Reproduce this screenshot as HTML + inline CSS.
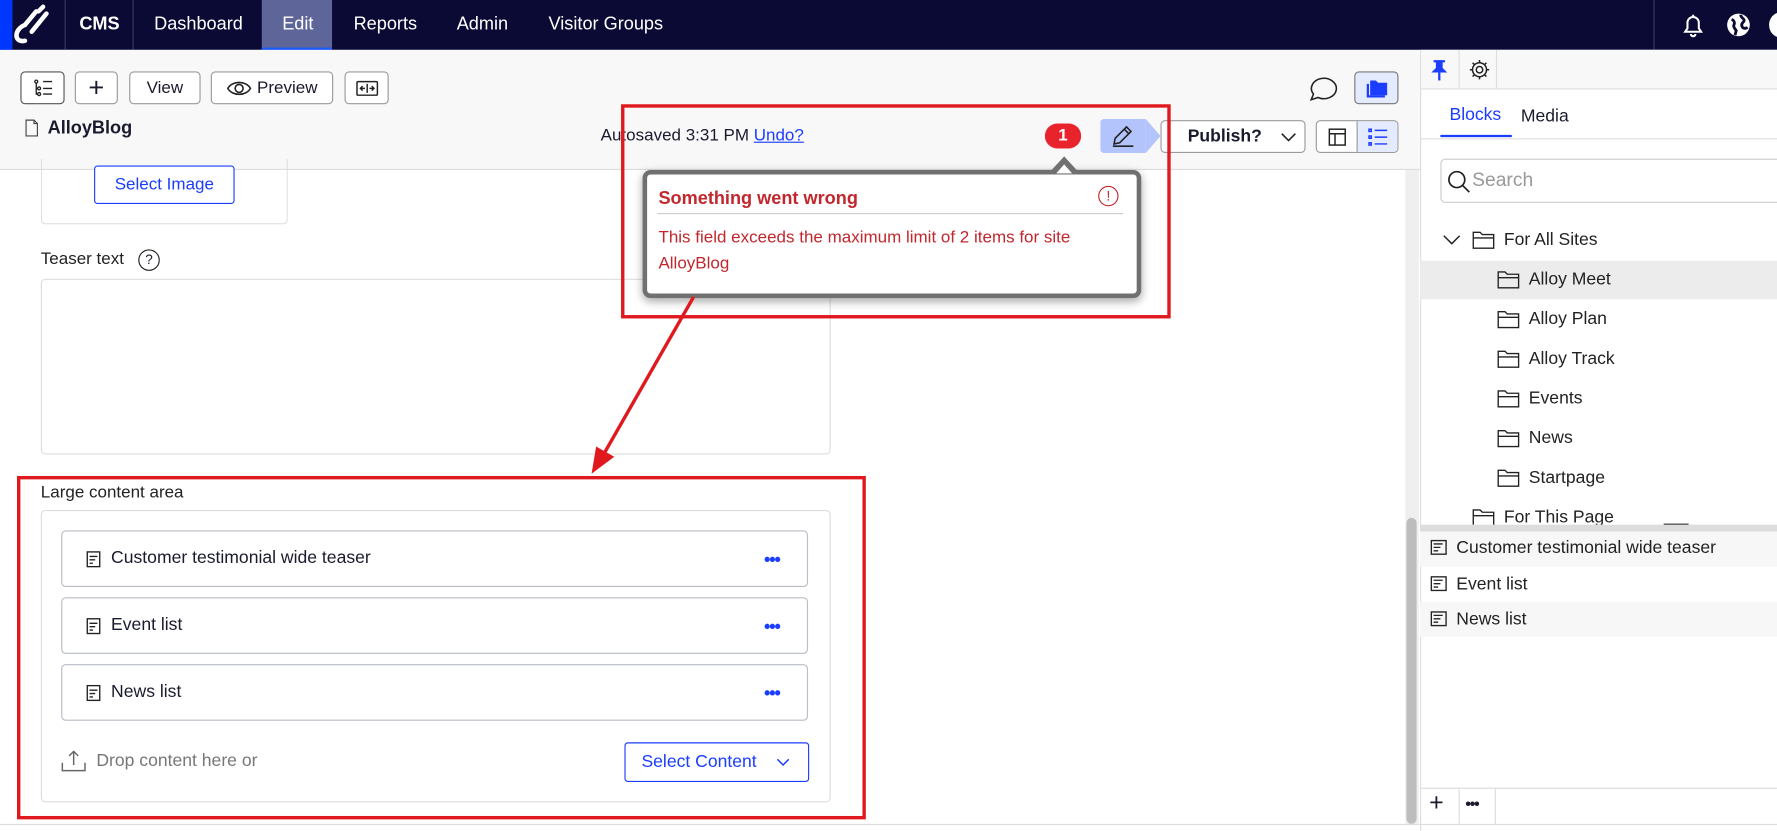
<!DOCTYPE html>
<html><head><meta charset="utf-8"><style>
*{box-sizing:border-box;margin:0;padding:0}
html,body{width:1777px;height:831px;overflow:hidden;background:#fff}
#w{position:absolute;left:0;top:0;width:1568px;height:733px;transform:scale(1.13329);transform-origin:0 0;font-family:"Liberation Sans",sans-serif;color:#1a1a2e;font-size:15px}
.a{position:absolute}
.nav{left:0;top:0;width:1568px;height:44px;background:#0b0a35;color:#fff}
.nav span{position:absolute;top:13px;font-size:16px}
.btn{position:absolute;border:1px solid #9a9a9a;border-radius:4px;background:#fff;height:29px;font-size:15px;display:flex;align-items:center;justify-content:center}
.lbl{position:absolute;font-size:15px;color:#222}
.item{position:absolute;left:54px;width:659px;height:50px;border:1px solid #b8bcc6;border-radius:4px;background:#fff}
.item .t{position:absolute;left:43px;top:15px;font-size:15.5px}
.item .d{position:absolute;right:24px;top:17px;color:#1a3dff;font-weight:bold;font-size:16px;letter-spacing:-1px}
.row{position:absolute;left:1253px;width:315px;height:31px}
.fd{position:absolute;font-size:15.5px;color:#222}
.fd svg{position:absolute;left:-28px;top:1px}
.li{position:absolute;left:1285px;font-size:15.5px;color:#222}
.li svg{position:absolute;left:-23px;top:1px}
</style></head><body><div id="w">
<div class="a nav">
 <div class="a" style="left:0;top:0;width:11px;height:44px;background:#0037ff"></div>
 <svg class="a" style="left:8px;top:4px" width="40" height="36" viewBox="0 0 40 36"><g fill="none" stroke="#fff" stroke-width="4" stroke-linecap="round"><path d="M14 18 C4 22 4 34 14 32"/><path d="M14 18 L24 6"/><path d="M20 24 L33 8"/><path d="M26 6 L30 2"/></g></svg>
 <div class="a" style="left:57px;top:0;width:1px;height:44px;background:#3a3a60"></div>
 <span style="left:70px;font-weight:bold">CMS</span>
 <div class="a" style="left:117px;top:0;width:1px;height:44px;background:#3a3a60"></div>
 <span style="left:136px">Dashboard</span>
 <div class="a" style="left:231px;top:0;width:62px;height:44px;background:#5e6599;border-bottom:2px solid #1a5cff"></div>
 <span style="left:249px">Edit</span>
 <span style="left:312px">Reports</span>
 <span style="left:403px">Admin</span>
 <span style="left:484px">Visitor Groups</span>
 <div class="a" style="left:1459px;top:0;width:1px;height:44px;background:#3a3a60"></div>
 <svg class="a" style="left:1482px;top:10px" width="24" height="24" viewBox="0 0 24 24" fill="none" stroke="#fff" stroke-width="1.8"><path d="M5 18h14l-2-3v-5a5 5 0 0 0-10 0v5z"/><path d="M10 20a2 2 0 0 0 4 0"/><path d="M12 3v2"/></svg>
 <svg class="a" style="left:1523px;top:11px" width="22" height="22" viewBox="0 0 22 22"><circle cx="11" cy="11" r="10" fill="#fff"/><path d="M5 6c2 1 3 3 2 5s1 3 2 5l-1 4M13 2c0 3 3 3 3 5s-3 2-2 5 4 2 5 1" fill="none" stroke="#0b0a35" stroke-width="2.5"/></svg>
 <div class="a" style="left:1561px;top:11px;width:20px;height:22px;border-radius:50%;background:#fff"></div>
</div>
<div class="a" style="left:0;top:44px;width:1253px;height:106px;background:#f8f8f8;border-bottom:1px solid #ddd"></div>
<div class="btn" style="left:18px;top:63px;width:39px;border-color:#555"><svg width="18" height="16" viewBox="0 0 18 16" fill="none" stroke="#222" stroke-width="1.2"><circle cx="3" cy="2" r="1.3"/><circle cx="5.5" cy="8" r="1.3"/><circle cx="5.5" cy="13" r="1.3"/><path d="M3 3.5v9.5h1M3 8h1M9 2h8M9 8h8M9 13h8"/></svg></div>
<div class="btn" style="left:66px;top:63px;width:38px;font-size:24px;font-weight:300">+</div>
<div class="btn" style="left:114px;top:63px;width:63px">View</div>
<div class="btn" style="left:186px;top:63px;width:108px"><svg width="22" height="16" viewBox="0 0 22 16" fill="none" stroke="#222" stroke-width="1.4" style="margin-right:5px"><path d="M1 8c4-7 16-7 20 0c-4 7-16 7-20 0z"/><circle cx="11" cy="8" r="3.5"/></svg>Preview</div>
<div class="btn" style="left:304px;top:63px;width:39px"><svg width="20" height="14" viewBox="0 0 20 14" fill="none" stroke="#222" stroke-width="1.3"><rect x="1" y="1" width="18" height="12" rx="1"/><path d="M10 3v8M4 7h4M6 5l-2 2 2 2M12 7h4M14 5l2 2-2 2"/></svg></div>
<svg class="a" style="left:22px;top:105px" width="12" height="16" viewBox="0 0 12 16" fill="none" stroke="#444" stroke-width="1"><path d="M1 1h7l3 3v11H1z M8 1v3h3"/></svg>
<div class="a" style="left:42px;top:105px;font-weight:bold;font-size:16px">AlloyBlog</div>
<div class="a" style="left:530px;top:111px;font-size:15px">Autosaved 3:31 PM <span style="color:#1a3dff;text-decoration:underline">Undo?</span></div>
<div class="a" style="left:922px;top:109px;width:32px;height:22px;border-radius:11px;background:#e8232b;color:#fff;font-weight:bold;text-align:center;font-size:15px;line-height:22px">1</div>
<div class="a" style="left:971px;top:105px;width:40px;height:30px;background:#b3c3fb;border-radius:3px 0 0 3px"></div>
<div class="a" style="left:1011px;top:105px;width:0;height:0;border-top:15px solid transparent;border-bottom:15px solid transparent;border-left:13px solid #b3c3fb"></div>
<svg class="a" style="left:980px;top:109px" width="22" height="22" viewBox="0 0 22 22" fill="none" stroke="#222" stroke-width="1.4"><path d="M3 18l1-5 10-10 4 4-10 10z M12 5l4 4 M2 20h18"/></svg>
<div class="btn" style="left:1024px;top:106px;width:128px;height:29px;justify-content:flex-start;padding-left:23px;font-weight:bold;font-size:15.5px">Publish?<svg style="position:absolute;left:105px;top:10px" width="14" height="8" viewBox="0 0 14 8" fill="none" stroke="#222" stroke-width="1.4"><path d="M1 1l6 6 6-6"/></svg></div>
<div class="btn" style="left:1161px;top:106px;width:73px;height:29px;overflow:hidden;justify-content:flex-start">
 <svg style="margin-left:10px" width="16" height="16" viewBox="0 0 16 16" fill="none" stroke="#222" stroke-width="1.3"><rect x="1" y="1" width="14" height="14"/><path d="M1 5h14M6 5v10"/></svg>
 <div style="position:absolute;left:35px;top:0;width:38px;height:29px;background:#e5ebff;border-left:1px solid #999"></div>
 <svg style="position:absolute;left:45px;top:6px" width="18" height="16" viewBox="0 0 18 16" fill="none" stroke="#1a3dff" stroke-width="1.3"><rect x="1" y="1" width="2" height="2"/><rect x="1" y="7" width="2" height="2"/><rect x="1" y="13" width="2" height="2"/><path d="M6 2h11M6 8h11M6 14h11"/></svg>
</div>
<svg class="a" style="left:1152px;top:64px" width="28" height="27" viewBox="0 0 28 27" fill="none" stroke="#222" stroke-width="1.4"><path d="M5 24l2-5A11 9 0 1 1 11 22z"/></svg>
<div class="btn" style="left:1195px;top:63px;width:39px;height:29px;background:#e5ebff;border-color:#777"><svg width="20" height="16" viewBox="0 0 20 16"><path d="M1 4h2v10h14v2H1z" fill="#1a3dff"/><path d="M4 1h5l2 2h8v11H4z" fill="#1a3dff"/></svg></div>
<div class="a" style="left:1240px;top:150px;width:12px;height:578px;background:#efefef"></div>
<div class="a" style="left:1241px;top:457px;width:9px;height:270px;background:#bdbdbd;border-radius:5px"></div>
<div class="a" style="left:36px;top:140px;width:218px;height:58px;border:1px solid #ddd;border-top:none;border-radius:0 0 4px 4px"></div>
<div class="a" style="left:83px;top:146px;width:124px;height:34px;border:1px solid #1a3dff;border-radius:3px;color:#1a3dff;text-align:center;line-height:32px;font-size:15px;background:#fff">Select Image</div>
<div class="lbl" style="left:36px;top:220px">Teaser text</div>
<div class="a" style="left:122px;top:220px;width:19px;height:19px;border:1.3px solid #222;border-radius:50%;font-size:12px;text-align:center;line-height:17px">?</div>
<div class="a" style="left:36px;top:246px;width:697px;height:155px;border:1px solid #ddd;border-radius:4px"></div>
<div class="lbl" style="left:36px;top:426px">Large content area</div>
<div class="a" style="left:36px;top:450px;width:697px;height:258px;border:1px solid #ddd;border-radius:4px"></div>
<div class="item" style="top:468px"><svg class="a" style="left:21px;top:17px" width="13" height="15" viewBox="0 0 13 15" fill="none" stroke="#222" stroke-width="1.2"><rect x="1" y="1" width="11" height="13"/><path d="M3 5h7M3 8h5M3 11h3"/></svg><span class="t">Customer testimonial wide teaser</span><span class="d">•••</span></div>
<div class="item" style="top:527px"><svg class="a" style="left:21px;top:17px" width="13" height="15" viewBox="0 0 13 15" fill="none" stroke="#222" stroke-width="1.2"><rect x="1" y="1" width="11" height="13"/><path d="M3 5h7M3 8h5M3 11h3"/></svg><span class="t">Event list</span><span class="d">•••</span></div>
<div class="item" style="top:586px"><svg class="a" style="left:21px;top:17px" width="13" height="15" viewBox="0 0 13 15" fill="none" stroke="#222" stroke-width="1.2"><rect x="1" y="1" width="11" height="13"/><path d="M3 5h7M3 8h5M3 11h3"/></svg><span class="t">News list</span><span class="d">•••</span></div>
<svg class="a" style="left:54px;top:661px" width="22" height="20" viewBox="0 0 22 20" fill="none" stroke="#666" stroke-width="1.3"><path d="M11 14V2M7 6l4-4 4 4M1 12v7h20v-7"/></svg>
<div class="a" style="left:85px;top:663px;color:#777;font-size:15.5px">Drop content here or</div>
<div class="a" style="left:551px;top:655px;width:163px;height:35px;border:1px solid #1a3dff;border-radius:3px;color:#1a3dff;font-size:15.5px;line-height:33px;padding-left:14px;background:#fff">Select Content<svg style="position:absolute;left:133px;top:13px" width="12" height="7" viewBox="0 0 12 7" fill="none" stroke="#1a3dff" stroke-width="1.3"><path d="M1 1l5 5 5-5"/></svg></div>
<div class="a" style="left:0;top:727px;width:1253px;height:1px;background:#ddd"></div>
<div class="a" style="left:1253px;top:44px;width:315px;height:689px;background:#fff;border-left:1px solid #ddd"></div>
<div class="a" style="left:1254px;top:44px;width:314px;height:35px;background:#f8f8f8;border-bottom:1px solid #ddd"></div>
<div class="a" style="left:1287px;top:44px;width:1px;height:35px;background:#ddd"></div>
<div class="a" style="left:1320px;top:44px;width:1px;height:35px;background:#ddd"></div>
<svg class="a" style="left:1262px;top:52px" width="16" height="20" viewBox="0 0 16 20" fill="#1a3dff"><path d="M3 1h10v2h-2v5l4 4H1l4-4V3H3z"/><rect x="7" y="12" width="2" height="7"/></svg>
<svg class="a" style="left:1296px;top:52px" width="19" height="19" viewBox="0 0 20 20" fill="none" stroke="#222" stroke-width="1.4"><circle cx="10" cy="10" r="3"/><circle cx="10" cy="10" r="6.5"/><path d="M10 1v2.5M10 16.5V19M1 10h2.5M16.5 10H19M3.6 3.6l1.8 1.8M14.6 14.6l1.8 1.8M3.6 16.4l1.8-1.8M14.6 5.4l1.8-1.8"/></svg>
<div class="a" style="left:1279px;top:93px;color:#1a3dff;font-size:15.5px">Blocks</div>
<div class="a" style="left:1342px;top:94px;font-size:15.5px">Media</div>
<div class="a" style="left:1271px;top:119px;width:63px;height:2px;background:#1a3dff"></div>
<div class="a" style="left:1254px;top:122px;width:314px;height:1px;background:#ddd"></div>
<div class="a" style="left:1271px;top:140px;width:310px;height:39px;border:1px solid #ccc;border-radius:4px"></div>
<svg class="a" style="left:1277px;top:150px" width="21" height="21" viewBox="0 0 21 21" fill="none" stroke="#222" stroke-width="1.5"><circle cx="8.5" cy="8.5" r="7"/><path d="M13.5 13.5l6 6"/></svg>
<div class="a" style="left:1299px;top:149px;color:#999;font-size:17px">Search</div>
<svg class="a" style="left:1273px;top:207px" width="16" height="10" viewBox="0 0 16 10" fill="none" stroke="#222" stroke-width="1.3"><path d="M1 1l7 7 7-7"/></svg>
<div class="a" style="left:1253px;top:230px;width:315px;height:34px;background:#ececec"></div>
<div class="fd" style="left:1327px;top:203px"><svg width="20" height="16" viewBox="0 0 20 16" fill="none" stroke="#222" stroke-width="1.2"><path d="M1 1h6l2 2h10v12H1z M1 6h18"/></svg>For All Sites</div>
<div class="fd" style="left:1349px;top:238px"><svg width="20" height="16" viewBox="0 0 20 16" fill="none" stroke="#222" stroke-width="1.2"><path d="M1 1h6l2 2h10v12H1z M1 6h18"/></svg>Alloy Meet</div>
<div class="fd" style="left:1349px;top:273px"><svg width="20" height="16" viewBox="0 0 20 16" fill="none" stroke="#222" stroke-width="1.2"><path d="M1 1h6l2 2h10v12H1z M1 6h18"/></svg>Alloy Plan</div>
<div class="fd" style="left:1349px;top:308px"><svg width="20" height="16" viewBox="0 0 20 16" fill="none" stroke="#222" stroke-width="1.2"><path d="M1 1h6l2 2h10v12H1z M1 6h18"/></svg>Alloy Track</div>
<div class="fd" style="left:1349px;top:343px"><svg width="20" height="16" viewBox="0 0 20 16" fill="none" stroke="#222" stroke-width="1.2"><path d="M1 1h6l2 2h10v12H1z M1 6h18"/></svg>Events</div>
<div class="fd" style="left:1349px;top:378px"><svg width="20" height="16" viewBox="0 0 20 16" fill="none" stroke="#222" stroke-width="1.2"><path d="M1 1h6l2 2h10v12H1z M1 6h18"/></svg>News</div>
<div class="fd" style="left:1349px;top:413px"><svg width="20" height="16" viewBox="0 0 20 16" fill="none" stroke="#222" stroke-width="1.2"><path d="M1 1h6l2 2h10v12H1z M1 6h18"/></svg>Startpage</div>
<div class="a" style="left:1254px;top:440px;width:314px;height:23px;overflow:hidden"><div class="fd" style="left:73px;top:8px"><svg width="20" height="16" viewBox="0 0 20 16" fill="none" stroke="#222" stroke-width="1.2"><path d="M1 1h6l2 2h10v12H1z M1 6h18"/></svg>For This Page</div></div>
<div class="a" style="left:1253px;top:463px;width:315px;height:6px;background:#ddd"></div>
<div class="a" style="left:1468px;top:462px;width:22px;height:1px;background:#333"></div>
<div class="row" style="top:469px;background:#f7f7f7"></div>
<div class="row" style="top:531px;background:#f7f7f7"></div>
<div class="li" style="top:475px"><svg width="15" height="14" viewBox="0 0 15 14" fill="none" stroke="#222" stroke-width="1.2"><rect x="1" y="1" width="13" height="12"/><path d="M3 4h8M3 7h6M3 10h4"/></svg>Customer testimonial wide teaser</div>
<div class="li" style="top:507px"><svg width="15" height="14" viewBox="0 0 15 14" fill="none" stroke="#222" stroke-width="1.2"><rect x="1" y="1" width="13" height="12"/><path d="M3 4h8M3 7h6M3 10h4"/></svg>Event list</div>
<div class="li" style="top:538px"><svg width="15" height="14" viewBox="0 0 15 14" fill="none" stroke="#222" stroke-width="1.2"><rect x="1" y="1" width="13" height="12"/><path d="M3 4h8M3 7h6M3 10h4"/></svg>News list</div>
<div class="a" style="left:1254px;top:695px;width:314px;height:1px;background:#ddd"></div>
<div class="a" style="left:1287px;top:695px;width:1px;height:33px;background:#ddd"></div>
<div class="a" style="left:1319px;top:695px;width:1px;height:33px;background:#ddd"></div>
<div class="a" style="left:1261px;top:695px;font-size:22px;font-weight:300">+</div>
<div class="a" style="left:1293px;top:701px;font-weight:bold;font-size:14px;letter-spacing:-1px">•••</div>
<div class="a" style="left:1254px;top:727px;width:314px;height:1px;background:#ddd"></div>
<div class="a" style="left:567px;top:150px;width:440px;height:113px;border:4px solid #707070;border-radius:7px;background:#fff;box-shadow:0 3px 8px rgba(0,0,0,.35)">
 <div class="a" style="left:10px;top:13px;color:#c1272d;font-weight:bold;font-size:16px">Something went wrong</div>
 <div class="a" style="left:398px;top:10px;width:18px;height:18px;border:1.3px solid #c1272d;border-radius:50%;color:#c1272d;font-size:12px;text-align:center;line-height:16px">!</div>
 <div class="a" style="left:9px;top:34px;width:411px;height:1px;background:#ccc"></div>
 <div class="a" style="left:10px;top:44px;color:#c1272d;font-size:15px;line-height:23px">This field exceeds the maximum limit of 2 items for site<br>AlloyBlog</div>
</div>
<div class="a" style="left:927px;top:138px;width:0;height:0;border-left:12px solid transparent;border-right:12px solid transparent;border-bottom:13px solid #707070"></div>
<div class="a" style="left:932px;top:145px;width:0;height:0;border-left:7px solid transparent;border-right:7px solid transparent;border-bottom:8px solid #fff"></div>
<div class="a" style="left:548px;top:92px;width:485px;height:189px;border:3.5px solid #e0191f"></div>
<div class="a" style="left:15px;top:420px;width:749px;height:303px;border:3.5px solid #e0191f"></div>
<svg class="a" style="left:0;top:0" width="1568" height="733"><line x1="612" y1="262" x2="532" y2="402" stroke="#e0191f" stroke-width="3"/><polygon points="522,418 526,394 542,403" fill="#e0191f"/></svg>
</div></body></html>
